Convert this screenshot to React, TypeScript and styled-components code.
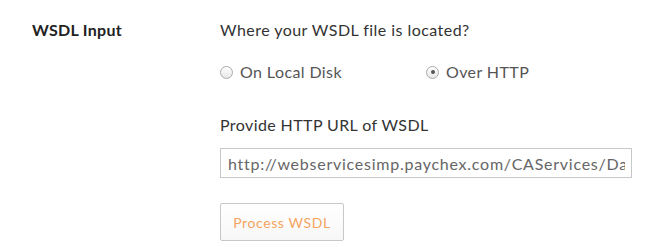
import styled, { createGlobalStyle } from "styled-components";

const Global = createGlobalStyle`
  body {
    margin: 0;
    background: #fff;
    font-family: "Lato", "Open Sans", sans-serif;
  }
`

const Row = styled.div`
  display: grid;
  grid-template-columns: 188px 412px;
  padding: 20px 0 0 32px;
`

const Label = styled.div`
  font-size: 16px;
  font-weight: 700;
  color: #222;
  line-height: 20px;
  letter-spacing: 0.3px;
`

const Field = styled.div`
  display: flex;
  flex-direction: column;
  min-width: 0;
`

const Question = styled.div`
  font-size: 16px;
  color: #333;
  line-height: 20px;
  letter-spacing: 0.45px;
`

const Radios = styled.div`
  display: flex;
  margin-top: 22px;
`

const RadioOption = styled.label<{ $width: number }>`
  display: flex;
  align-items: center;
  gap: 7px;
  width: ${(p) => p.$width}px;
  font-size: 16px;
  color: #555;
  line-height: 20px;
  letter-spacing: 0.4px;
`

const Dot = styled.span<{ $checked?: boolean }>`
  width: 13px;
  height: 13px;
  border-radius: 50%;
  border: 1px solid #aaa;
  background: linear-gradient(#fff, #e6e6e6);
  box-sizing: border-box;
  display: flex;
  align-items: center;
  justify-content: center;

  &::after {
    content: "";
    width: 4px;
    height: 4px;
    border-radius: 50%;
    background: #555;
    display: ${(p) => (p.$checked ? "block" : "none")};
  }
`

const SubLabel = styled.div`
  font-size: 16px;
  color: #333;
  line-height: 20px;
  margin-top: 33px;
  letter-spacing: 0.4px;
`

const UrlInput = styled.input`
  margin: 13px 0 0;
  width: 412px;
  height: 30px;
  box-sizing: border-box;
  border: 1px solid #c8c8c8;
  border-radius: 0;
  padding: 0 6px 0 7px;
  font-family: inherit;
  font-size: 16px;
  color: #666;
  letter-spacing: 0.75px;
  outline: none;
  background: #fff;
`

const Button = styled.button`
  margin-top: 25px;
  width: 124px;
  height: 38px;
  border: 1px solid #c8c8c8;
  border-radius: 2px;
  background: linear-gradient(#fff, #f7f7f7);
  color: #f5a45d;
  font-family: inherit;
  font-size: 14px;
  letter-spacing: 0.6px;
  align-self: flex-start;
`

export default function App() {
  return (
    <>
      <Global />
      <Row>
        <Label>WSDL Input</Label>
        <Field>
          <Question>Where your WSDL file is located?</Question>
          <Radios>
            <RadioOption $width={206}>
              <Dot />
              On Local Disk
            </RadioOption>
            <RadioOption $width={120}>
              <Dot $checked />
              Over HTTP
            </RadioOption>
          </Radios>
          <SubLabel>Provide HTTP URL of WSDL</SubLabel>
          <UrlInput readOnly value="http://webservicesimp.paychex.com/CAServices/DataService.svc?wsdl" />
          <Button>Process WSDL</Button>
        </Field>
      </Row>
    </>
  )
}
